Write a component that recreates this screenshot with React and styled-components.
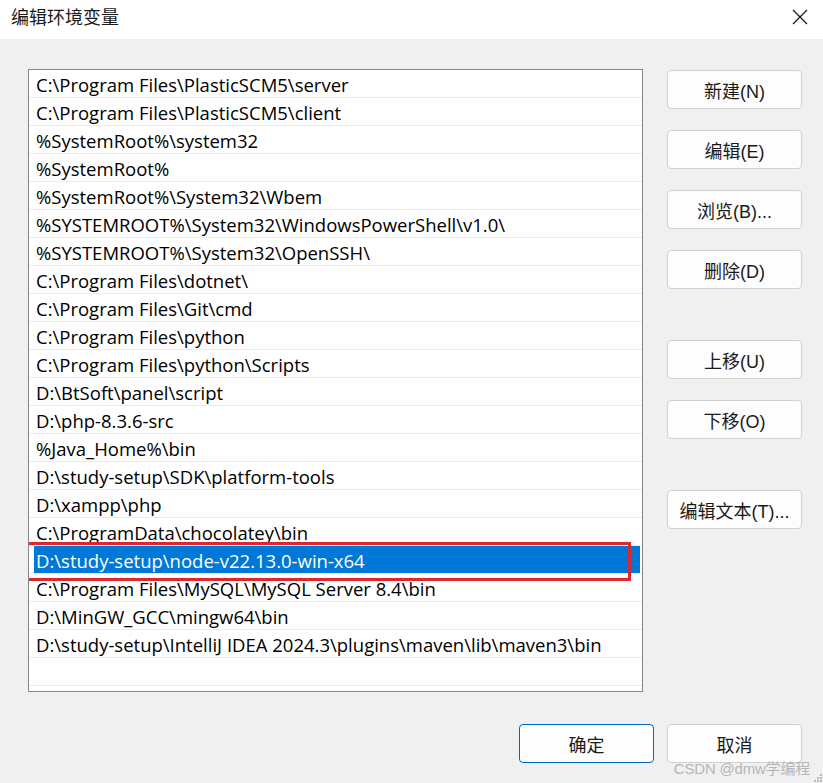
import React from 'react';
import styled, { createGlobalStyle } from 'styled-components';

const GlobalStyle = createGlobalStyle`
  html, body {
    margin: 0;
    padding: 0;
    background: #f0f0f0;
  }
  body {
    font-family: "Liberation Sans", "Noto Sans CJK SC", sans-serif;
    color: #000;
  }
`;

const Dialog = styled.div`
  position: relative;
  width: 823px;
  height: 783px;
  display: flex;
  flex-direction: column;
  background: #f0f0f0;
  overflow: hidden;
`;

const TitleBar = styled.div`
  height: 39px;
  flex: none;
  display: flex;
  align-items: center;
  justify-content: space-between;
  background: #fff;
  padding: 0 15px 0 11px;
  box-sizing: border-box;
`;

const Title = styled.span`
  font-size: 18px;
  color: #1a1a1a;
  margin-top: -7px;
`;

const CloseIcon = styled.svg`
  width: 16px;
  height: 16px;
  margin-top: -6px;
`;

const Body = styled.div`
  flex: 1;
  display: flex;
  flex-direction: column;
  padding: 30px 21px 0 28px;
`;

const Main = styled.div`
  display: flex;
  gap: 24px;
  height: 623px;
`;

const List = styled.div`
  width: 615px;
  height: 623px;
  box-sizing: border-box;
  border: 1px solid #868686;
  background: #fff;
  overflow: hidden;
`;

const Row = styled.div`
  position: relative;
  height: 27px;
  border-bottom: 1px solid #ececec;
  padding: 0 2px 0 5px;
  display: flex;
`;

const Label = styled.div`
  flex: 1;
  display: flex;
  align-items: center;
  padding: 2px 0 0 2px;
  font-family: "Open Sans", "Noto Sans CJK SC", sans-serif;
  font-size: 18.5px;
  white-space: nowrap;
  background: ${(p) => (p.$selected ? '#0078d7' : 'transparent')};
  color: ${(p) => (p.$selected ? '#fff' : '#000')};
`;

const Highlight = styled.div`
  position: absolute;
  left: -10px;
  top: -4px;
  width: 612px;
  height: 39px;
  box-sizing: border-box;
  border: 3px solid #e0262c;
  pointer-events: none;
`;

const Side = styled.div`
  width: 135px;
  display: flex;
  flex-direction: column;
  padding-top: 1px;
`;

const Button = styled.button`
  width: 135px;
  height: 39px;
  box-sizing: border-box;
  background: #fdfdfd;
  border: 1px solid ${(p) => (p.$default ? '#0067c0' : '#d0d0d0')};
  border-radius: 4px;
  font-family: "Liberation Sans", "Noto Sans CJK SC", sans-serif;
  font-size: 18px;
  color: #1a1a1a;
  padding: 0;
  margin-top: ${(p) => p.$gap || 0}px;
`;

const Footer = styled.div`
  display: flex;
  justify-content: flex-end;
  gap: 13px;
  margin-top: 32px;
`;

const Watermark = styled.div`
  position: absolute;
  right: 13px;
  bottom: 5px;
  font-size: 15px;
  letter-spacing: -0.2px;
  color: rgba(160, 160, 160, 0.75);
  white-space: nowrap;
`;

const Grip = styled.svg`
  position: absolute;
  right: 1px;
  bottom: 1px;
  width: 8px;
  height: 8px;
`;

const paths = [
  'C:\\Program Files\\PlasticSCM5\\server',
  'C:\\Program Files\\PlasticSCM5\\client',
  '%SystemRoot%\\system32',
  '%SystemRoot%',
  '%SystemRoot%\\System32\\Wbem',
  '%SYSTEMROOT%\\System32\\WindowsPowerShell\\v1.0\\',
  '%SYSTEMROOT%\\System32\\OpenSSH\\',
  'C:\\Program Files\\dotnet\\',
  'C:\\Program Files\\Git\\cmd',
  'C:\\Program Files\\python',
  'C:\\Program Files\\python\\Scripts',
  'D:\\BtSoft\\panel\\script',
  'D:\\php-8.3.6-src',
  '%Java_Home%\\bin',
  'D:\\study-setup\\SDK\\platform-tools',
  'D:\\xampp\\php',
  'C:\\ProgramData\\chocolatey\\bin',
  'D:\\study-setup\\node-v22.13.0-win-x64',
  'C:\\Program Files\\MySQL\\MySQL Server 8.4\\bin',
  'D:\\MinGW_GCC\\mingw64\\bin',
  'D:\\study-setup\\IntelliJ IDEA 2024.3\\plugins\\maven\\lib\\maven3\\bin',
  '',
  '',
];

const SELECTED = 17;

const sideButtons = [
  { label: '新建(N)', gap: 0 },
  { label: '编辑(E)', gap: 21 },
  { label: '浏览(B)...', gap: 21 },
  { label: '删除(D)', gap: 21 },
  { label: '上移(U)', gap: 51 },
  { label: '下移(O)', gap: 21 },
  { label: '编辑文本(T)...', gap: 51 },
];

export default function App() {
  return (
    <Dialog>
      <GlobalStyle />
      <TitleBar>
        <Title>编辑环境变量</Title>
        <CloseIcon viewBox="0 0 16 16">
          <path d="M1 1L15 15M15 1L1 15" stroke="#1a1a1a" strokeWidth="1.3" fill="none" />
        </CloseIcon>
      </TitleBar>
      <Body>
        <Main>
          <List>
            {paths.map((p, i) => (
              <Row key={i}>
                <Label $selected={i === SELECTED}>{p}</Label>
                {i === SELECTED && <Highlight />}
              </Row>
            ))}
          </List>
          <Side>
            {sideButtons.map((b) => (
              <Button key={b.label} $gap={b.gap}>
                {b.label}
              </Button>
            ))}
          </Side>
        </Main>
        <Footer>
          <Button $default>确定</Button>
          <Button>取消</Button>
        </Footer>
      </Body>
      <Watermark>CSDN @dmw学编程</Watermark>
      <Grip viewBox="0 0 8 8">
        <rect x="6" y="0" width="2" height="2" fill="#b8b8b8" />
        <rect x="3" y="3" width="2" height="2" fill="#b8b8b8" />
        <rect x="6" y="3" width="2" height="2" fill="#b8b8b8" />
        <rect x="0" y="6" width="2" height="2" fill="#b8b8b8" />
        <rect x="3" y="6" width="2" height="2" fill="#b8b8b8" />
        <rect x="6" y="6" width="2" height="2" fill="#b8b8b8" />
      </Grip>
    </Dialog>
  );
}
